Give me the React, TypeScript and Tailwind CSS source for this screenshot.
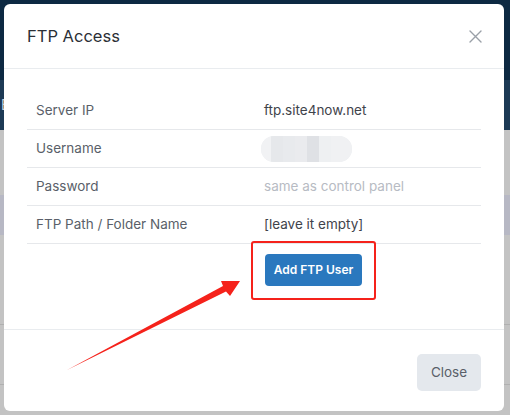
const rows: { label: string; value: string; muted?: boolean; blurred?: boolean }[] = [
  { label: 'Server IP', value: 'ftp.site4now.net' },
  { label: 'Username', value: '', blurred: true },
  { label: 'Password', value: 'same as control panel', muted: true },
  { label: 'FTP Path / Folder Name', value: '[leave it empty]' },
];

function Backdrop() {
  return (
    <div className="absolute inset-0 flex flex-col">
      <div className="h-[80px] bg-[#0d2942]" />
      <div className="h-[50px] bg-[#1d3a55] flex items-center text-[#c9d2dc] text-sm pl-[1px]">E</div>
      <div className="h-[65px] bg-[#c3c3c3]" />
      <div className="h-[40px] bg-[#b7b8c4]" />
      <div className="flex-1 bg-[#c3c3c3] flex flex-col">
        <div className="h-[90px] border-b border-[#b0b0b0]" />
        <div className="h-[60px] border-b border-[#b0b0b0]" />
      </div>
    </div>
  );
}

function Arrow() {
  return (
    <svg className="absolute left-0 top-0 pointer-events-none" width="510" height="415" viewBox="0 0 510 415">
      <polygon
        points="67,370 223,286 221,281 240,281 230,296 226,291.5"
        fill="#f5221b"
      />
    </svg>
  );
}

export default function App() {
  return (
    <div
      className="relative w-[510px] h-[415px] overflow-hidden"
      style={{ fontFamily: 'Inter, "Open Sans", sans-serif' }}
    >
      <Backdrop />

      {/* Modal */}
      <div className="absolute left-[4px] top-[4px] w-[500px] h-[407px] bg-white rounded-[6px] flex flex-col">
        {/* Header */}
        <div className="h-[65px] flex items-center justify-between pl-[23px] pr-[22px] border-b border-[#e9ecef]">
          <h2 className="text-[16.5px] text-[#2b2f36]">FTP Access</h2>
          <svg width="13" height="13" viewBox="0 0 13 13" className="mt-[1px]">
            <path d="M1 1 L12 12 M12 1 L1 12" stroke="#9aa0a8" strokeWidth="1.4" strokeLinecap="round" />
          </svg>
        </div>

        {/* Body */}
        <div className="h-[261px] px-[23px] pt-[23px] border-b border-[#e9ecef]">
          <div className="flex flex-col">
            {rows.map((r) => (
              <div key={r.label} className="h-[38px] flex items-center border-b border-[#e6e8eb] text-[13.5px]">
                <div className="w-[234px] pl-[9px] text-[#5a5f69]">{r.label}</div>
                {r.blurred ? (
                  <div className="w-[91px] h-[26px] rounded-full bg-[#eceef1] flex overflow-hidden">
                    <div className="w-[10px] bg-[#f1f2f4]" />
                    <div className="w-[12px] bg-[#e6e8eb]" />
                    <div className="w-[12px] bg-[#e8eaed]" />
                    <div className="w-[12px] bg-[#eaebee]" />
                    <div className="w-[12px] bg-[#dfe1e5]" />
                    <div className="w-[12px] bg-[#eef0f2]" />
                    <div className="flex-1 bg-[#f0f1f3]" />
                  </div>
                ) : (
                  <div className={r.muted ? 'text-[#b7bbc3] pl-[3px]' : 'text-[#3f434b] pl-[3px]'}>{r.value}</div>
                )}
              </div>
            ))}
          </div>
          <div className="relative mt-[10px] ml-[238px]">
            <button className="h-[32px] w-[97px] rounded-[4px] bg-[#2a78be] text-white text-[12px] font-semibold">
              Add FTP User
            </button>
            <div className="absolute -left-[14px] -top-[13px] w-[125px] h-[59px] border-2 border-[#f5221b] rounded-[3px]" />
          </div>
        </div>

        {/* Footer */}
        <div className="flex-1 flex justify-end items-start pt-[24px] pr-[23px]">
          <button className="h-[37px] w-[64px] rounded-[5px] bg-[#e4e8ed] text-[#5a5f69] text-[13.5px]">Close</button>
        </div>
      </div>

      <Arrow />
    </div>
  );
}
